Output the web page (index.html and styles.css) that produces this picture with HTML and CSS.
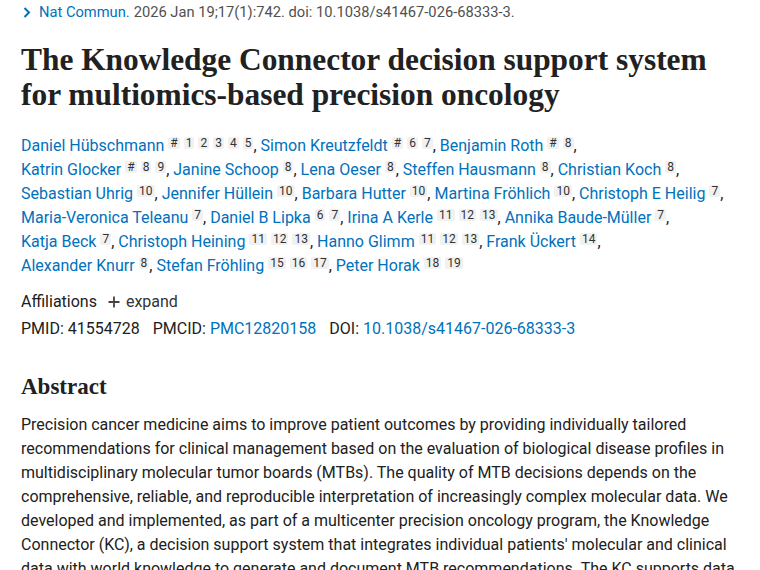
FILE: index.html
```html
<!DOCTYPE html>
<html lang="en">
<head>
<meta charset="utf-8">
<title>The Knowledge Connector decision support system</title>
<link rel="stylesheet" href="styles.css">
</head>
<body>
<main class="article">
  <div class="citation">
    <svg class="chev" width="8" height="11" viewBox="0 0 8 11"><polyline points="1.5,1 6,5.5 1.5,10" fill="none" stroke="#0071bc" stroke-width="2"/></svg>
    <a class="link" href="#">Nat Commun.</a><span class="cit">2026 Jan 19;17(1):742. doi: 10.1038/s41467-026-68333-3.</span>
  </div>

  <h1 class="title">The Knowledge Connector decision support system for multiomics-based precision oncology</h1>

  <div class="authors">
    <span class="author"><a class="link" href="#">Daniel Hübschmann</a><span class="sup">#</span><span class="sup">1</span><span class="sup">2</span><span class="sup">3</span><span class="sup">4</span><span class="sup">5</span>,</span>
    <span class="author"><a class="link" href="#">Simon Kreutzfeldt</a><span class="sup">#</span><span class="sup">6</span><span class="sup">7</span>,</span>
    <span class="author"><a class="link" href="#">Benjamin Roth</a><span class="sup">#</span><span class="sup">8</span>,</span>
    <span class="author"><a class="link" href="#">Katrin Glocker</a><span class="sup">#</span><span class="sup">8</span><span class="sup">9</span>,</span>
    <span class="author"><a class="link" href="#">Janine Schoop</a><span class="sup">8</span>,</span>
    <span class="author"><a class="link" href="#">Lena Oeser</a><span class="sup">8</span>,</span>
    <span class="author"><a class="link" href="#">Steffen Hausmann</a><span class="sup">8</span>,</span>
    <span class="author"><a class="link" href="#">Christian Koch</a><span class="sup">8</span>,</span>
    <span class="author"><a class="link" href="#">Sebastian Uhrig</a><span class="sup">10</span>,</span>
    <span class="author"><a class="link" href="#">Jennifer Hüllein</a><span class="sup">10</span>,</span>
    <span class="author"><a class="link" href="#">Barbara Hutter</a><span class="sup">10</span>,</span>
    <span class="author"><a class="link" href="#">Martina Fröhlich</a><span class="sup">10</span>,</span>
    <span class="author"><a class="link" href="#">Christoph E Heilig</a><span class="sup">7</span>,</span>
    <span class="author"><a class="link" href="#">Maria-Veronica Teleanu</a><span class="sup">7</span>,</span>
    <span class="author"><a class="link" href="#">Daniel B Lipka</a><span class="sup">6</span><span class="sup">7</span>,</span>
    <span class="author"><a class="link" href="#">Irina A Kerle</a><span class="sup">11</span><span class="sup">12</span><span class="sup">13</span>,</span>
    <span class="author"><a class="link" href="#">Annika Baude-Müller</a><span class="sup">7</span>,</span>
    <span class="author"><a class="link" href="#">Katja Beck</a><span class="sup">7</span>,</span>
    <span class="author"><a class="link" href="#">Christoph Heining</a><span class="sup">11</span><span class="sup">12</span><span class="sup">13</span>,</span>
    <span class="author"><a class="link" href="#">Hanno Glimm</a><span class="sup">11</span><span class="sup">12</span><span class="sup">13</span>,</span>
    <span class="author"><a class="link" href="#">Frank Ückert</a><span class="sup">14</span>,</span>
    <span class="author"><a class="link" href="#">Alexander Knurr</a><span class="sup">8</span>,</span>
    <span class="author"><a class="link" href="#">Stefan Fröhling</a><span class="sup">15</span><span class="sup">16</span><span class="sup">17</span>,</span>
    <span class="author"><a class="link" href="#">Peter Horak</a><span class="sup">18</span><span class="sup">19</span></span>
  </div>

  <div class="affil">
    <span>Affiliations</span>
    <span class="expand"><svg class="plus" width="12" height="12" viewBox="0 0 12 12"><path d="M6 0.5V11.5M0.5 6H11.5" stroke="#444" stroke-width="1.8" fill="none"/></svg>expand</span>
  </div>

  <div class="ids">
    <span>PMID: 41554728</span>
    <span>PMCID: <a class="link" href="#">PMC12820158</a></span>
    <span>DOI: <a class="link" href="#">10.1038/s41467-026-68333-3</a></span>
  </div>

  <h2 class="abs-title">Abstract</h2>
  <p class="abs-text">Precision cancer medicine aims to improve patient outcomes by providing individually tailored recommendations for clinical management based on the evaluation of biological disease profiles in multidisciplinary molecular tumor boards (MTBs). The quality of MTB decisions depends on the comprehensive, reliable, and reproducible interpretation of increasingly complex molecular data. We developed and implemented, as part of a multicenter precision oncology program, the Knowledge Connector (KC), a decision support system that integrates individual patients' molecular and clinical data with world knowledge to generate and document MTB recommendations. The KC supports data</p>
</main>
</body>
</html>
```
FILE: styles.css
```css
html, body {
  margin: 0;
  padding: 0;
  background: #fff;
}
body {
  font-family: Roboto, "Liberation Sans", sans-serif;
  font-size: 16px;
  color: #212121;
}
.article {
  width: 730px;
  padding-left: 21px;
}
.link {
  color: #0071bc;
  text-decoration: none;
}
.citation {
  display: flex;
  align-items: center;
  font-size: 14.7px;
  line-height: 24px;
  height: 24px;
}
.chev {
  margin-left: 2px;
  margin-right: 8px;
}
.cit {
  color: #505050;
  margin-left: 4px;
}
.title {
  font-family: "Liberation Serif", serif;
  font-weight: bold;
  font-size: 31.4px;
  line-height: 35px;
  margin: 18px 0 0;
  max-width: 712px;
  color: #212121;
}
.authors {
  margin-top: 22px;
  line-height: 24px;
  max-width: 705px;
}
.author {
  white-space: nowrap;
}
.sup {
  display: inline-block;
  font-size: 12px;
  line-height: 12px;
  height: 12px;
  padding: 0 2px;
  margin-left: 4px;
  background: #f1f1f1;
  border-radius: 2px;
  color: #333;
  vertical-align: 4px;
}
.affil {
  display: flex;
  align-items: center;
  margin-top: 12px;
  line-height: 24px;
}
.expand {
  display: flex;
  align-items: center;
  margin-left: 11px;
  color: #333;
}
.plus {
  margin-right: 6px;
}
.ids {
  display: flex;
  gap: 13px;
  margin-top: 3px;
  line-height: 24px;
}
.abs-title {
  font-family: "Liberation Serif", serif;
  font-weight: bold;
  font-size: 23px;
  line-height: 30px;
  margin: 31px 0 0;
}
.abs-text {
  margin: 11px 0 0;
  line-height: 24px;
}
```
